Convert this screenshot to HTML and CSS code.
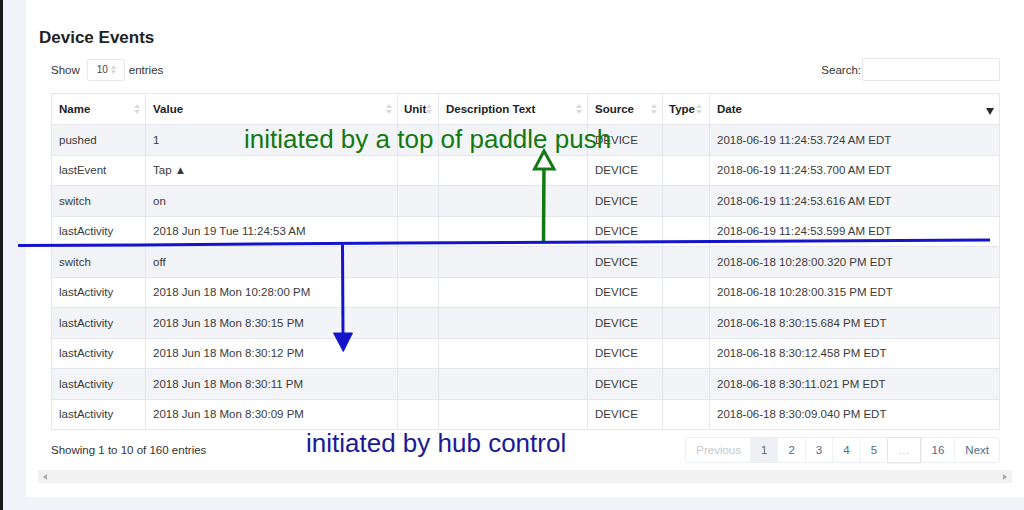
FILE: index.html
```html
<!DOCTYPE html>
<html>
<head>
<meta charset="utf-8">
<link rel="stylesheet" href="styles.css">
</head>
<body>
<div class="page">
  <div class="card">
    <h2 class="title">Device Events</h2>
    <div class="scroller">
      <div class="dt">
        <div class="controls">
          <div class="len">Show <span class="sel">10<svg class="spin" viewBox="0 0 6 10"><path d="M3 0L6 4H0Z M3 10L0 6H6Z"/></svg></span> entries</div>
          <div class="search">Search:<span class="inp"></span></div>
        </div>
        <table class="grid">
          <colgroup>
            <col class="c-name"><col class="c-value"><col class="c-unit"><col class="c-desc"><col class="c-src"><col class="c-type"><col class="c-date">
          </colgroup>
          <thead>
            <tr>
              <th><div class="hc"><span>Name</span><svg class="si" viewBox="0 0 6 10"><path d="M3 0L6 4H0Z M3 10L0 6H6Z"/></svg></div></th>
              <th><div class="hc"><span>Value</span><svg class="si" viewBox="0 0 6 10"><path d="M3 0L6 4H0Z M3 10L0 6H6Z"/></svg></div></th>
              <th class="tight"><div class="hc"><span>Unit</span><svg class="si" viewBox="0 0 6 10"><path d="M3 0L6 4H0Z M3 10L0 6H6Z"/></svg></div></th>
              <th><div class="hc"><span>Description Text</span><svg class="si" viewBox="0 0 6 10"><path d="M3 0L6 4H0Z M3 10L0 6H6Z"/></svg></div></th>
              <th><div class="hc"><span>Source</span><svg class="si" viewBox="0 0 6 10"><path d="M3 0L6 4H0Z M3 10L0 6H6Z"/></svg></div></th>
              <th class="tight"><div class="hc"><span>Type</span><svg class="si" viewBox="0 0 6 10"><path d="M3 0L6 4H0Z M3 10L0 6H6Z"/></svg></div></th>
              <th><div class="hc"><span>Date</span><svg class="sd" viewBox="0 0 8 8"><path d="M0 1H8L4 8Z"/></svg></div></th>
            </tr>
          </thead>
          <tbody>
            <tr><td>pushed</td><td>1</td><td></td><td></td><td>DEVICE</td><td></td><td>2018-06-19 11:24:53.724 AM EDT</td></tr>
            <tr><td>lastEvent</td><td>Tap ▲</td><td></td><td></td><td>DEVICE</td><td></td><td>2018-06-19 11:24:53.700 AM EDT</td></tr>
            <tr><td>switch</td><td>on</td><td></td><td></td><td>DEVICE</td><td></td><td>2018-06-19 11:24:53.616 AM EDT</td></tr>
            <tr><td>lastActivity</td><td>2018 Jun 19 Tue 11:24:53 AM</td><td></td><td></td><td>DEVICE</td><td></td><td>2018-06-19 11:24:53.599 AM EDT</td></tr>
            <tr><td>switch</td><td>off</td><td></td><td></td><td>DEVICE</td><td></td><td>2018-06-18 10:28:00.320 PM EDT</td></tr>
            <tr><td>lastActivity</td><td>2018 Jun 18 Mon 10:28:00 PM</td><td></td><td></td><td>DEVICE</td><td></td><td>2018-06-18 10:28:00.315 PM EDT</td></tr>
            <tr><td>lastActivity</td><td>2018 Jun 18 Mon 8:30:15 PM</td><td></td><td></td><td>DEVICE</td><td></td><td>2018-06-18 8:30:15.684 PM EDT</td></tr>
            <tr><td>lastActivity</td><td>2018 Jun 18 Mon 8:30:12 PM</td><td></td><td></td><td>DEVICE</td><td></td><td>2018-06-18 8:30:12.458 PM EDT</td></tr>
            <tr><td>lastActivity</td><td>2018 Jun 18 Mon 8:30:11 PM</td><td></td><td></td><td>DEVICE</td><td></td><td>2018-06-18 8:30:11.021 PM EDT</td></tr>
            <tr><td>lastActivity</td><td>2018 Jun 18 Mon 8:30:09 PM</td><td></td><td></td><td>DEVICE</td><td></td><td>2018-06-18 8:30:09.040 PM EDT</td></tr>
          </tbody>
        </table>
        <div class="foot">
          <div class="info">Showing 1 to 10 of 160 entries</div>
          <div class="pager">
            <span class="pg prev">Previous</span>
            <span class="pg active">1</span>
            <span class="pg">2</span>
            <span class="pg">3</span>
            <span class="pg">4</span>
            <span class="pg">5</span>
            <span class="pg dots">…</span>
            <span class="pg">16</span>
            <span class="pg next">Next</span>
          </div>
        </div>
      </div>
      <div class="hscroll">
        <svg class="arr" viewBox="0 0 4 6"><path d="M4 0V6L0 3Z"/></svg>
        <svg class="arr" viewBox="0 0 4 6"><path d="M0 0V6L4 3Z"/></svg>
      </div>
    </div>
  </div>
  <svg class="notes" width="1024" height="510" viewBox="0 0 1024 510">
    <text class="note-green" x="244" y="148">initiated by a top of paddle push</text>
    <path class="g-line" d="M543.5 243 L544 162"/>
    <path class="g-head" d="M544 151 L554 169 L534.5 169 Z"/>
    <path class="b-line" d="M18 245.5 L140 245 L400 243 L990 240"/>
    <path class="b-line" d="M342.5 245 L343 334"/>
    <path class="b-head" d="M333.5 333 L352.5 333 L343.3 351.5 Z"/>
    <text class="note-blue" x="306" y="452">initiated by hub control</text>
  </svg>
</div>
</body>
</html>
```

FILE: styles.css
```css
html, body {
  margin: 0;
  padding: 0;
}
body {
  font-family: "Liberation Sans", Arial, sans-serif;
  background: #f2f3f8;
  color: #333;
  overflow: hidden;
}
.page {
  position: relative;
  width: 1024px;
  height: 510px;
  box-sizing: border-box;
  border-left: 3px solid #1b1b1b;
  background: #f2f3f8;
}
.card {
  margin-left: 23px;
  height: 497px;
  background: #fff;
  box-sizing: border-box;
  padding: 28px 12px 0 13px;
}
.title {
  margin: 0;
  font-size: 17px;
  line-height: 20px;
  font-weight: bold;
  color: #222;
}
.scroller {
  margin-left: -1px;
}
.dt {
  padding: 0 13px 0 13px;
}
.controls {
  margin-top: 10px;
  height: 23px;
  display: flex;
  justify-content: space-between;
  align-items: center;
  font-size: 11.5px;
  color: #333;
}
.len {
  display: flex;
  align-items: center;
}
.sel {
  display: inline-flex;
  align-items: center;
  box-sizing: border-box;
  width: 38px;
  height: 22px;
  margin: 0 4px 0 7px;
  padding-left: 9px;
  border: 1px solid #e8e8ea;
  border-radius: 2px;
  font-size: 10px;
  color: #444;
}
.spin {
  width: 5px;
  height: 9px;
  margin-left: 3px;
  fill: #cfd2d6;
}
.search {
  display: flex;
  align-items: center;
  margin-right: -1px;
}
.inp {
  display: block;
  box-sizing: border-box;
  width: 138px;
  height: 23px;
  margin-left: 1px;
  border: 1px solid #e6e7ea;
  border-radius: 2px;
}
.grid {
  margin-top: 12px;
  width: 948px;
  table-layout: fixed;
  border-collapse: collapse;
  font-size: 11.5px;
}
.c-name { width: 94px; }
.c-value { width: 252px; }
.c-unit { width: 41px; }
.c-desc { width: 149px; }
.c-src { width: 75px; }
.c-type { width: 47px; }
.c-date { width: 290px; }
.grid th, .grid td {
  border: 1px solid #e5e7eb;
  text-align: left;
  white-space: nowrap;
  overflow: hidden;
}
.grid th {
  height: 30px;
  padding: 0 5px 0 7px;
  font-weight: bold;
  color: #222;
}
.grid th.tight {
  padding-left: 6px;
  padding-right: 7px;
}
.hc {
  display: flex;
  justify-content: space-between;
  align-items: center;
}
.si {
  width: 6px;
  height: 10px;
  fill: #d8dadd;
  flex: none;
}
.sd {
  width: 8px;
  height: 8px;
  fill: #2a2a2a;
  margin-top: 3px;
  flex: none;
}
.grid td {
  height: 29.5px;
  padding: 0 7px;
  color: #3a3a3a;
}
.grid tbody tr:nth-child(odd) td {
  background: #f3f4f7;
}
.foot {
  margin-top: 7px;
  display: flex;
  justify-content: space-between;
  align-items: center;
}
.info {
  font-size: 11.5px;
  color: #333;
}
.pager {
  display: flex;
  height: 26px;
  border: 1px solid #eceef2;
  border-radius: 3px;
  box-sizing: border-box;
  margin-right: -1px;
}
.pg {
  display: flex;
  align-items: center;
  padding: 0 10px;
  font-size: 11.5px;
  color: #4e6b88;
  border-left: 1px solid #f1f2f5;
}
.pg.prev {
  border-left: none;
  padding: 0 9px 0 10px;
  color: #c3c9d0;
}
.pg.active {
  background: #eef0f4;
}
.pg.dots {
  color: #c8ccd2;
  padding: 0 10px;
  border: 1px solid #e2e4e8;
  border-radius: 2px;
  margin: -1px 0;
  box-shadow: 0 1px 1px rgba(0,0,0,0.05);
}
.pg.next {
  padding: 0 10px;
}
.hscroll {
  margin-top: 7px;
  height: 13px;
  background: #f1f1f1;
  display: flex;
  justify-content: space-between;
  align-items: center;
  padding: 0 5px;
}
.arr {
  width: 4px;
  height: 6px;
  fill: #a8a8a8;
}
.notes {
  position: absolute;
  left: -3px;
  top: 0;
  pointer-events: none;
}
.note-green {
  font-family: "Liberation Sans", Arial, sans-serif;
  font-size: 26px;
  fill: #127812;
}
.note-blue {
  font-family: "Liberation Sans", Arial, sans-serif;
  font-size: 26px;
  fill: #1a1a96;
}
.g-line {
  stroke: #137a13;
  stroke-width: 3.5;
  fill: none;
}
.g-head {
  stroke: #137a13;
  stroke-width: 3;
  fill: #fff;
}
.b-line {
  stroke: #1414cc;
  stroke-width: 3;
  fill: none;
}
.b-head {
  fill: #1414cc;
  stroke: #1414cc;
  stroke-width: 1;
}
```
